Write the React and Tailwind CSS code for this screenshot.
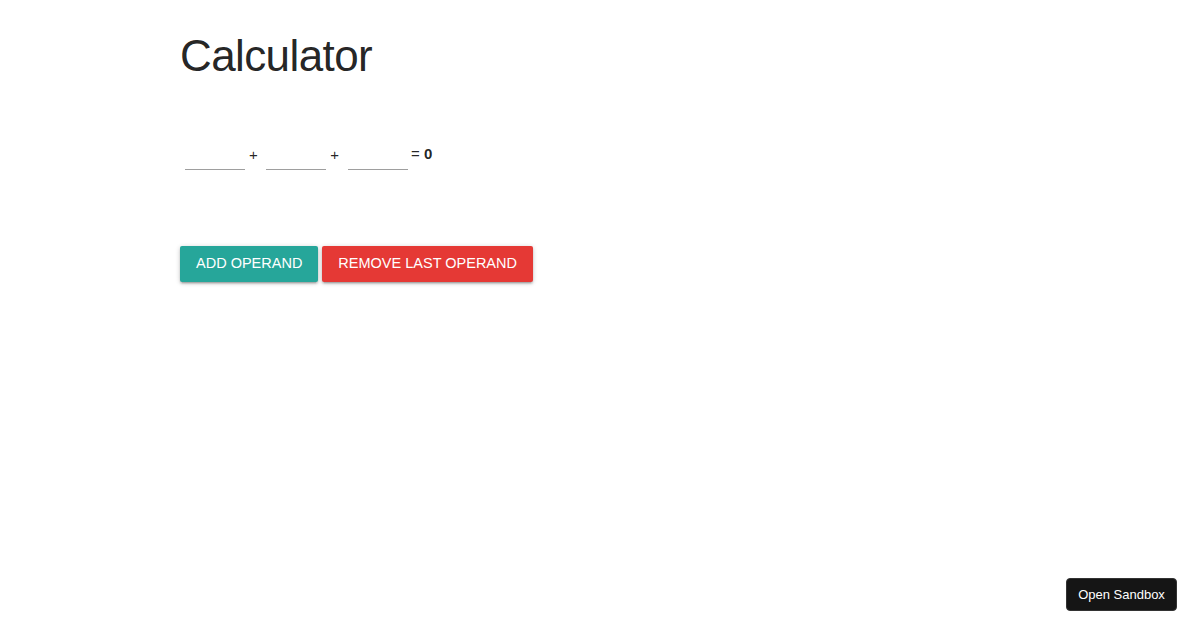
import React, { useState } from 'react';

const App = () => {
  const [operands, setOperands] = useState(['', '', '']);

  const total = operands.reduce((sum, v) => sum + (parseFloat(v) || 0), 0);

  const setValue = (i, v) => setOperands(operands.map((o, j) => (j === i ? v : o)));

  return (
    <div className="min-h-screen bg-white text-[rgba(0,0,0,0.87)]" style={{ fontFamily: '"Liberation Sans", Arial, sans-serif' }}>
      <div className="w-[840px] mx-auto pt-[30px]">
        <h3 className="text-[44px] leading-[51px] font-normal tracking-[-0.6px]">Calculator</h3>

        {/* Operand row */}
        <div className="flex items-end mt-[44px] h-[45px] text-[15px]">
          {operands.map((op, i) => (
            <React.Fragment key={i}>
              {i > 0 && <span className="ml-[4px] mr-[8.5px] pb-[4px] leading-[22px]">+</span>}
              <input
                value={op}
                onChange={(e) => setValue(i, e.target.value)}
                className={`w-[60px] h-[45px] border-b border-[#9e9e9e] outline-none bg-transparent text-[15px] ${i === 0 ? 'ml-[5px]' : ''}`}
              />
            </React.Fragment>
          ))}
          <span className="ml-[3.5px] pb-[5px] leading-[22px]">
            = <b className="font-bold">{total}</b>
          </span>
        </div>

        {/* Buttons */}
        <div className="flex gap-[4px] mt-[76px]">
          <button
            onClick={() => setOperands([...operands, ''])}
            className="h-[36px] px-4 bg-[#26a69a] text-white text-[14.5px] uppercase rounded-[2px] shadow-[0_2px_2px_0_rgba(0,0,0,0.14),0_3px_1px_-2px_rgba(0,0,0,0.12),0_1px_5px_0_rgba(0,0,0,0.2)]"
          >
            Add Operand
          </button>
          <button
            onClick={() => setOperands(operands.slice(0, -1))}
            className="h-[36px] px-4 bg-[#e53935] text-white text-[14.5px] uppercase rounded-[2px] shadow-[0_2px_2px_0_rgba(0,0,0,0.14),0_3px_1px_-2px_rgba(0,0,0,0.12),0_1px_5px_0_rgba(0,0,0,0.2)]"
          >
            Remove Last Operand
          </button>
        </div>
      </div>

      <button className="fixed right-[23px] bottom-[19px] w-[111px] h-[33px] bg-[#151515] text-white text-[13px] rounded-[4px] border border-[#333]">
        Open Sandbox
      </button>
    </div>
  );
};

export default App;
